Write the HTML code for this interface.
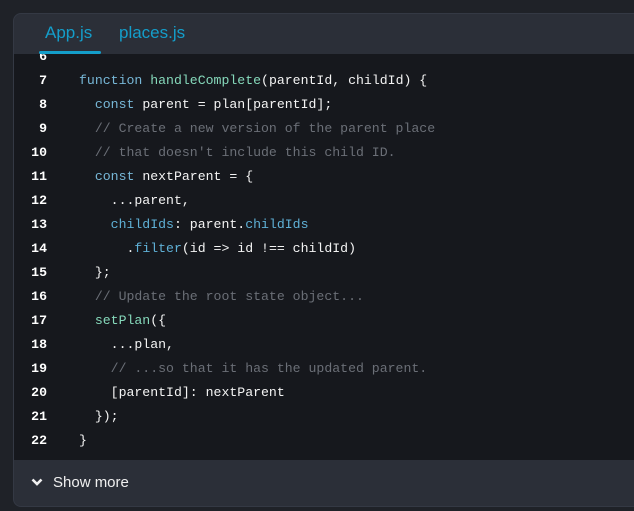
<!DOCTYPE html>
<html><head><style>
body{margin:0;width:634px;height:511px;background:#1f2228;overflow:hidden;font-family:"Liberation Sans",sans-serif}
.card{position:absolute;left:13px;top:13px;width:640px;height:492px;border-radius:8px;background:#2b2f38;overflow:hidden;border:1px solid #343944}
.tabs{height:40px;position:relative}
.tab{position:absolute;top:9px;font-size:17px;color:#149eca}
.ul{position:absolute;left:25px;top:37px;width:62px;height:3px;background:#149eca;border-radius:2px}
.code{position:absolute;top:40px;left:0;right:0;height:406px;background:#16181d;font-family:"Liberation Mono",monospace;font-size:13.2px;color:#f4f4f4;overflow:hidden}
.code div{margin-top:2px}
.ln{position:absolute;left:0;width:33px;text-align:right;color:#fff;font-weight:bold}
.l{position:absolute;left:65px;white-space:pre}
.k{color:#77b7d7}.f{color:#86d9bb}.c{color:#6b6f77}.p{color:#5fb0d6}
.more{position:absolute;top:446px;left:0;right:0;height:46px;color:#f0f0f0;font-size:15px}
</style></head><body>
<div class="card">
<div class="tabs"><span class="tab" style="left:31px">App.js</span><span class="tab" style="left:105px">places.js</span><div class="ul"></div></div>
<div class="code">
<div class="ln" style="top:-7px">6</div>
<div class="ln" style="top:17px">7</div><div class="l" style="top:17px"><span class="k">function</span> <span class="f">handleComplete</span>(parentId, childId) {</div>
<div class="ln" style="top:41px">8</div><div class="l" style="top:41px">  <span class="k">const</span> parent = plan[parentId];</div>
<div class="ln" style="top:65px">9</div><div class="l c" style="top:65px">  // Create a new version of the parent place</div>
<div class="ln" style="top:89px">10</div><div class="l c" style="top:89px">  // that doesn't include this child ID.</div>
<div class="ln" style="top:113px">11</div><div class="l" style="top:113px">  <span class="k">const</span> nextParent = {</div>
<div class="ln" style="top:137px">12</div><div class="l" style="top:137px">    ...parent,</div>
<div class="ln" style="top:161px">13</div><div class="l" style="top:161px">    <span class="p">childIds</span>: parent.<span class="p">childIds</span></div>
<div class="ln" style="top:185px">14</div><div class="l" style="top:185px">      .<span class="p">filter</span>(id =&gt; id !== childId)</div>
<div class="ln" style="top:209px">15</div><div class="l" style="top:209px">  };</div>
<div class="ln" style="top:233px">16</div><div class="l c" style="top:233px">  // Update the root state object...</div>
<div class="ln" style="top:257px">17</div><div class="l" style="top:257px">  <span class="f">setPlan</span>({</div>
<div class="ln" style="top:281px">18</div><div class="l" style="top:281px">    ...plan,</div>
<div class="ln" style="top:305px">19</div><div class="l c" style="top:305px">    // ...so that it has the updated parent.</div>
<div class="ln" style="top:329px">20</div><div class="l" style="top:329px">    [parentId]: nextParent</div>
<div class="ln" style="top:353px">21</div><div class="l" style="top:353px">  });</div>
<div class="ln" style="top:377px">22</div><div class="l" style="top:377px">}</div>
</div>
<div class="more"><svg style="position:absolute;left:16px;top:16px" width="14" height="12" viewBox="0 0 14 12"><path d="M2.5 3.5l4.5 4.5 4.5-4.5" stroke="#f0f0f0" stroke-width="2.6" fill="none"/></svg><span style="position:absolute;left:39px;top:14px">Show more</span></div>
</div>
</body></html>
